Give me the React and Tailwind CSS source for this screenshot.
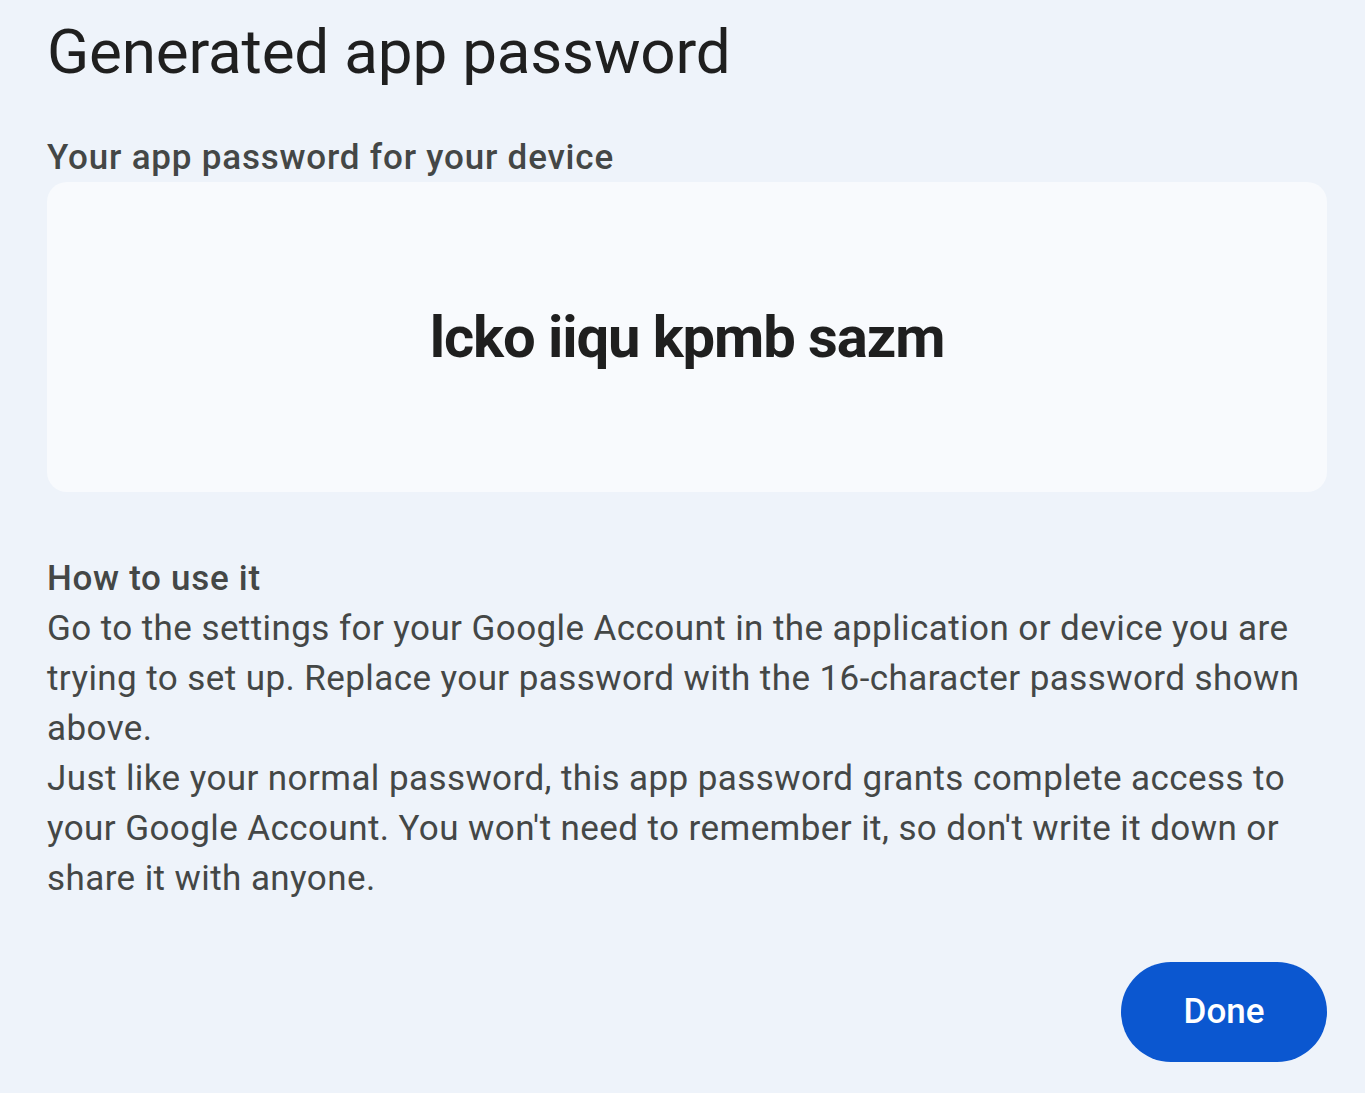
import React from "react";

export default function App() {
  return (
    <div className="min-h-screen bg-[#eef3fa] text-[#1f1f1f] font-['Roboto',sans-serif]">
      <div className="pl-[47px] pr-[38px] pt-[14px] pb-[31px]">
        <h1 className="text-[62px] leading-[76px] font-normal tracking-[-0.2px] text-[#1f1f1f]">Generated app password</h1>

        <div className="mt-[46px] text-[35px] leading-[44px] font-medium tracking-[0.8px] text-[#444746]">Your app password for your device</div>
        <div className="mt-[2px] h-[310px] rounded-[20px] bg-[#f8fafd] flex items-center justify-center">
          <span className="text-[58px] font-bold tracking-[-1.1px] text-[#1f1f1f]">lcko iiqu kpmb sazm</span>
        </div>

        <div className="mt-[62px] text-[35px] leading-[50px] tracking-[0.42px] text-[#444746]">
          <div className="font-medium tracking-[0.7px]">How to use it</div>
          <p>Go to the settings for your Google Account in the application or device you are trying to set up. Replace your password with the 16-character password shown above.</p>
          <p>Just like your normal password, this app password grants complete access to your Google Account. You won't need to remember it, so don't write it down or share it with anyone.</p>
        </div>

        <div className="mt-[58px] flex justify-end">
          <button className="h-[100px] w-[206px] rounded-full bg-[#0b57d0] text-white text-[35px] font-medium">Done</button>
        </div>
      </div>
    </div>
  );
}
